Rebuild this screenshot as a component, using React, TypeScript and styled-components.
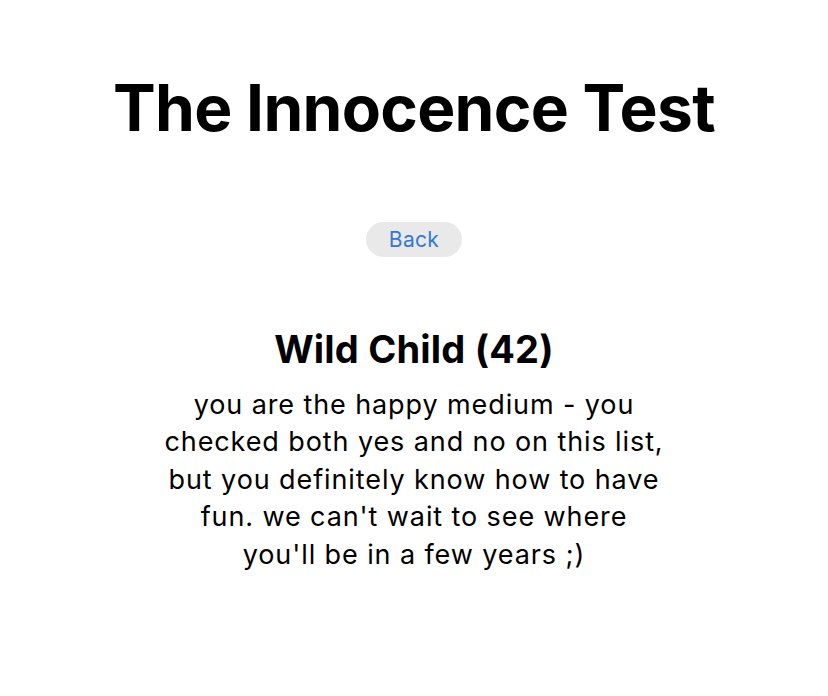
import { styled, createGlobalStyle } from "styled-components";

const GlobalStyle = createGlobalStyle`
  html, body {
    margin: 0;
    padding: 0;
    background: #ffffff;
  }
  body {
    font-family: Inter, "Noto Sans", "Liberation Sans", sans-serif;
    color: #000000;
  }
`;

const App = () => {
  return (
    <Page>
      <GlobalStyle />
      <Title>The Innocence Test</Title>
      <BackButton type="button">Back</BackButton>
      <Result>
        <ResultName>Wild Child (42)</ResultName>
        <ResultText>
          you are the happy medium - you checked both yes and no on this list,
          but you definitely know how to have fun. we can't wait to see where
          you'll be in a few years ;)
        </ResultText>
      </Result>
    </Page>
  );
};

export default App;

const Page = styled.div`
  display: flex;
  flex-direction: column;
  align-items: center;
  width: 100%;
  min-height: 696px;
  padding-top: 72px;
  box-sizing: border-box;
`;

const Title = styled.h1`
  margin: 0;
  font-size: 64px;
  font-weight: 700;
  line-height: 72px;
  letter-spacing: -0.7px;
`;

const BackButton = styled.button`
  margin-top: 78px;
  width: 96px;
  height: 35px;
  border: none;
  border-radius: 18px;
  background: #e9e9ea;
  color: #3478d6;
  font-family: inherit;
  font-size: 21px;
  letter-spacing: 0.3px;
  padding: 0;
`;

const Result = styled.div`
  display: flex;
  flex-direction: column;
  align-items: center;
  margin-top: 69px;
  width: 500px;
`;

const ResultName = styled.h2`
  margin: 0;
  font-size: 38px;
  font-weight: 700;
  line-height: 46px;
  letter-spacing: 0.2px;
`;

const ResultText = styled.p`
  margin: 14px 0 0;
  font-size: 27px;
  line-height: 37.4px;
  letter-spacing: 0.9px;
  text-align: center;
`;
